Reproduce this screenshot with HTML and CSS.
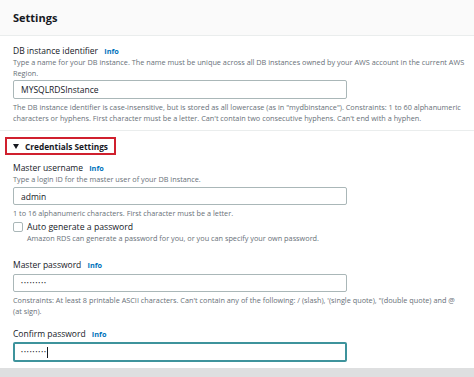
FILE: index.html
```html
<!DOCTYPE html>
<html lang="en">
<head>
    <meta charset="UTF-8">
    <meta name="viewport" content="width=device-width, initial-scale=1.0">
    <title>Settings</title>
    <link rel="stylesheet" href="styles.css">
</head>
<body>
    <div class="panel">
        <div class="panel-header">Settings</div>

        <div class="panel-body">
            <div class="field first">
                <div class="label">DB instance identifier <span class="info">Info</span></div>
                <div class="desc">Type a name for your DB instance. The name must be unique across all DB instances owned by your AWS account in the current AWS Region.</div>
                <div class="input">MYSQLRDSInstance</div>
                <div class="hint">The DB instance identifier is case-insensitive, but is stored as all lowercase (as in "mydbinstance"). Constraints: 1 to 60 alphanumeric characters or hyphens. First character must be a letter. Can't contain two consecutive hyphens. Can't end with a hyphen.</div>
            </div>
        </div>

        <div class="divider"></div>

        <div class="panel-body">
            <div class="expander">
                <svg width="6" height="5" viewBox="0 0 6 5"><polygon points="0,0 6,0 3,5" fill="#16191f"/></svg>
                <span>Credentials Settings</span>
            </div>

            <div class="field user">
                <div class="label">Master username <span class="info">Info</span></div>
                <div class="desc">Type a login ID for the master user of your DB instance.</div>
                <div class="input">admin</div>
                <div class="hint">1 to 16 alphanumeric characters. First character must be a letter.</div>
            </div>

            <div class="check-row">
                <span class="checkbox"></span>
                <div>
                    <div class="check-label">Auto generate a password</div>
                    <div class="desc">Amazon RDS can generate a password for you, or you can specify your own password.</div>
                </div>
            </div>

            <div class="field pass">
                <div class="label">Master password <span class="info">Info</span></div>
                <div class="input input-pass"><span class="dots">•••••••••</span></div>
                <div class="hint">Constraints: At least 8 printable ASCII characters. Can't contain any of the following: / (slash), '(single quote), "(double quote) and @ (at sign).</div>
            </div>

            <div class="field confirm">
                <div class="label">Confirm password <span class="info">Info</span></div>
                <div class="input input-pass focused"><span class="dots">•••••••••</span><span class="caret"></span></div>
            </div>
        </div>
    </div>
</body>
</html>
```

FILE: styles.css
```css
body {
    margin: 0;
    background-color: #dedfe0;
    font-family: "Open Sans", Arial, sans-serif;
    color: #16191f;
}

.panel {
    background: #fff;
    padding-bottom: 6px;
}

.panel-header {
    height: 35px;
    line-height: 35px;
    padding-left: 13px;
    background-color: #fafafa;
    border-bottom: 1px solid #eaeded;
    font-size: 11px;
    font-weight: bold;
}

.panel-body {
    padding: 0 8px 0 13px;
}

.field {
    display: flex;
    flex-direction: column;
}

.field.first {
    padding-top: 9px;
}

.label {
    font-size: 8.5px;
    line-height: 12px;
}

.info {
    color: #0073bb;
    font-weight: bold;
    font-size: 7.3px;
    margin-left: 4px;
}

.desc, .hint {
    font-size: 7.3px;
    line-height: 11px;
    color: #687078;
}

.input {
    box-sizing: border-box;
    width: 334px;
    height: 19px;
    margin-top: 1px;
    padding-left: 7px;
    border: 1px solid #aab7b8;
    border-radius: 2px;
    font-size: 8.5px;
    line-height: 17px;
    display: flex;
    align-items: center;
}

.hint {
    margin-top: 3px;
    padding-right: 5px;
}

.divider {
    height: 1px;
    background-color: #eaeded;
    margin-top: 6px;
}

.expander {
    box-sizing: border-box;
    width: 111px;
    height: 18px;
    margin: 6px 0 0 -8px;
    padding-left: 6px;
    border: 2px solid #d0202e;
    display: flex;
    align-items: center;
    gap: 6px;
    font-size: 8.3px;
    font-weight: bold;
    white-space: nowrap;
}

.field.user {
    margin-top: 7px;
}

.field.user .input {
    height: 18px;
    margin-top: 2px;
}

.check-row {
    display: flex;
    margin-top: 2px;
}

.checkbox {
    box-sizing: border-box;
    width: 10px;
    height: 10px;
    margin: 1px 4px 0 0;
    border: 1px solid #aab7b8;
    border-radius: 2px;
    flex-shrink: 0;
}

.check-label {
    font-size: 8.7px;
    line-height: 12px;
}

.field.pass {
    margin-top: 15px;
}

.field.pass .input {
    height: 18px;
    margin-top: 3px;
}

.field.confirm {
    margin-top: 11px;
}

.field.confirm .input {
    height: 20px;
    margin-top: 2px;
}

.dots {
    font-size: 5px;
    letter-spacing: 1px;
    color: #16191f;
}

.focused {
    border: 2px solid #3e939c;
    padding-left: 6px;
}

.caret {
    width: 1px;
    height: 11px;
    background-color: #16191f;
}
```
